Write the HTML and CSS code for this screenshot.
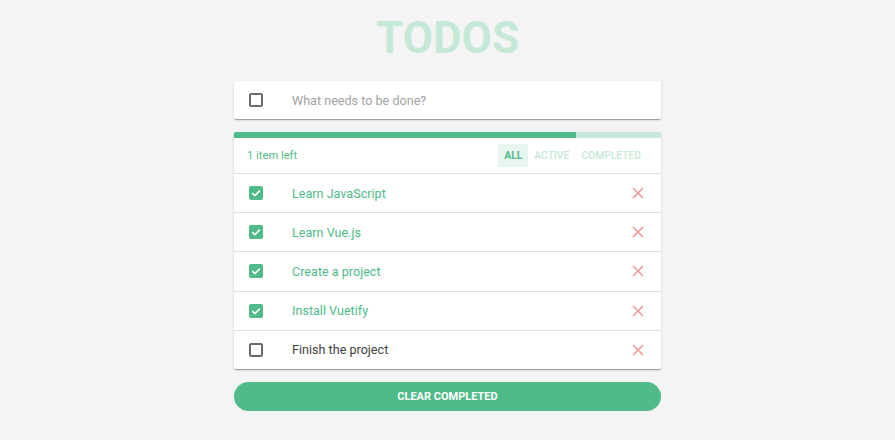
FILE: index.html
```html
<!DOCTYPE html>
<html>
<head>
<meta charset="utf-8">
<link rel="stylesheet" href="styles.css">
</head>
<body>
<div class="app">
  <h1 class="title">TODOS</h1>
  <div class="card input-card">
    <span class="cb"></span>
    <span class="placeholder">What needs to be done?</span>
  </div>
  <div class="card list-card">
    <div class="progress"><div class="progress-fill" style="width:80%"></div></div>
    <div class="header">
      <span class="left">1 item left</span>
      <div class="filters">
        <span class="filter active">ALL</span>
        <span class="filter">ACTIVE</span>
        <span class="filter">COMPLETED</span>
      </div>
    </div>
    <div class="row done"><span class="cb checked"><svg viewBox="0 0 14 14"><path d="M3.3 7.2 L5.9 9.7 L10.8 4.6" fill="none" stroke="#fff" stroke-width="1.6"/></svg></span><span class="text">Learn JavaScript</span><svg class="x" viewBox="0 0 12 12"><path d="M1 1 L11 11 M11 1 L1 11" stroke="#ef9a9a" stroke-width="1.6"/></svg></div>
    <div class="row done"><span class="cb checked"><svg viewBox="0 0 14 14"><path d="M3.3 7.2 L5.9 9.7 L10.8 4.6" fill="none" stroke="#fff" stroke-width="1.6"/></svg></span><span class="text">Learn Vue.js</span><svg class="x" viewBox="0 0 12 12"><path d="M1 1 L11 11 M11 1 L1 11" stroke="#ef9a9a" stroke-width="1.6"/></svg></div>
    <div class="row done"><span class="cb checked"><svg viewBox="0 0 14 14"><path d="M3.3 7.2 L5.9 9.7 L10.8 4.6" fill="none" stroke="#fff" stroke-width="1.6"/></svg></span><span class="text">Create a project</span><svg class="x" viewBox="0 0 12 12"><path d="M1 1 L11 11 M11 1 L1 11" stroke="#ef9a9a" stroke-width="1.6"/></svg></div>
    <div class="row done"><span class="cb checked"><svg viewBox="0 0 14 14"><path d="M3.3 7.2 L5.9 9.7 L10.8 4.6" fill="none" stroke="#fff" stroke-width="1.6"/></svg></span><span class="text">Install Vuetify</span><svg class="x" viewBox="0 0 12 12"><path d="M1 1 L11 11 M11 1 L1 11" stroke="#ef9a9a" stroke-width="1.6"/></svg></div>
    <div class="row"><span class="cb"></span><span class="text">Finish the project</span><svg class="x" viewBox="0 0 12 12"><path d="M1 1 L11 11 M11 1 L1 11" stroke="#ef9a9a" stroke-width="1.6"/></svg></div>
  </div>
  <button class="clear">CLEAR COMPLETED</button>
</div>
</body>
</html>
```
FILE: styles.css
```css
html, body {
  margin: 0;
  padding: 0;
  background: #f4f4f4;
  font-family: Roboto, "Liberation Sans", sans-serif;
}
.app {
  width: 427px;
  margin: 0 auto;
  display: flex;
  flex-direction: column;
}
.title {
  margin: 14px 0 0;
  height: 67px;
  font-size: 44px;
  line-height: 48px;
  font-weight: 700;
  color: #c6e9d7;
  text-align: center;
}
.card {
  background: #fff;
  border-radius: 2px;
  box-shadow: 0 2px 1px -1px rgba(0,0,0,.2), 0 1px 1px 0 rgba(0,0,0,.14), 0 1px 3px 0 rgba(0,0,0,.12);
}
.input-card {
  height: 38px;
  display: flex;
  align-items: center;
  padding-left: 15px;
}
.placeholder {
  margin-left: 29px;
  font-size: 12.6px;
  color: #a3a3a3;
}
.cb {
  width: 14px;
  height: 14px;
  box-sizing: border-box;
  border: 2px solid #6b6b6b;
  border-radius: 2px;
  display: inline-flex;
  flex: none;
}
.cb.checked {
  border: none;
  background: #4fbb88;
}
.cb svg { width: 14px; height: 14px; }
.list-card {
  margin-top: 13px;
  overflow: hidden;
}
.progress {
  height: 6px;
  background: #c8eadb;
}
.progress-fill {
  height: 100%;
  background: #4fbb88;
}
.header {
  height: 35px;
  display: flex;
  align-items: center;
  justify-content: space-between;
  padding: 0 14px 0 13px;
  font-size: 11.2px;
  color: #4fbb88;
}
.filters { display: flex; }
.filter {
  height: 23px;
  padding: 0 6px;
  display: flex;
  align-items: center;
  font-size: 10.3px;
  font-weight: 500;
  color: #c5e8d6;
}
.filter.active {
  background: #e9f6ef;
  color: #4fbb88;
  font-weight: 700;
}
.row {
  height: 38.2px;
  border-top: 1px solid #e0e0e0;
  display: flex;
  align-items: center;
  padding: 0 17px 0 15px;
}
.row .text {
  margin-left: 29px;
  flex: 1;
  font-size: 12.6px;
  color: #424242;
}
.row.done .text { color: #4fbb88; }
.x { width: 12px; height: 12px; flex: none; }
.clear {
  margin-top: 13px;
  height: 29px;
  border: none;
  border-radius: 15px;
  background: #4fbb88;
  color: #fff;
  font-family: Roboto, sans-serif;
  font-weight: 700;
  font-size: 11px;
  padding: 0;
}
```
